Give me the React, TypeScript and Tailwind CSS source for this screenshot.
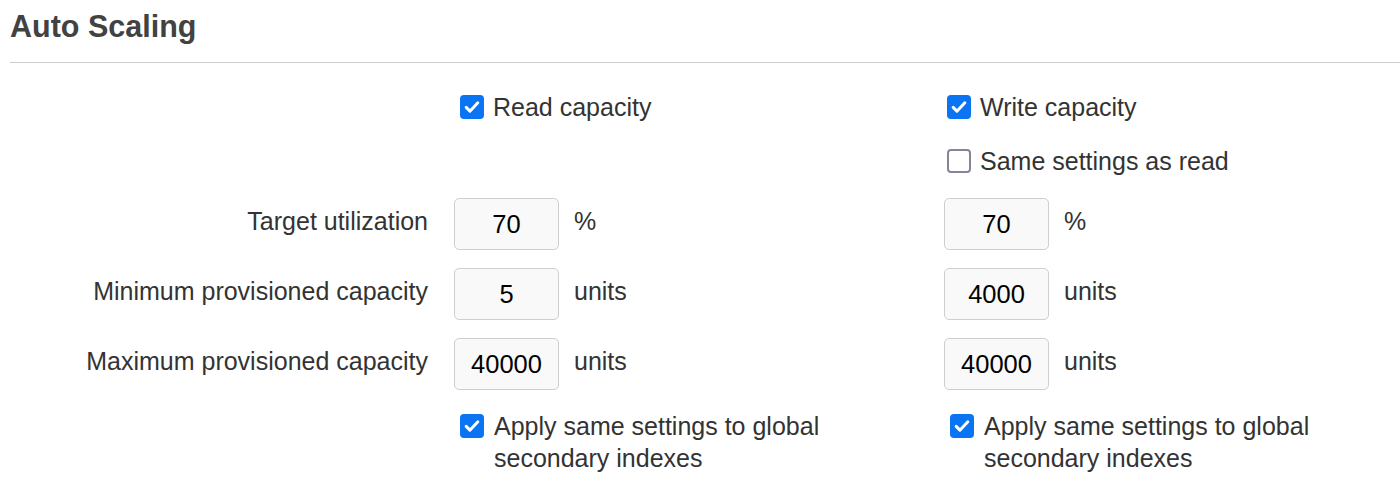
import React from "react";

function Check({ checked }: { checked: boolean }) {
  if (checked) {
    return (
      <span className="flex h-[24px] w-[24px] shrink-0 items-center justify-center rounded-[4px] bg-[#0a74f2]">
        <svg width="20" height="20" viewBox="0 0 24 24" fill="none">
          <path d="M5 12.5l4.5 4.5L19 7" stroke="#fff" strokeWidth="3.6" strokeLinecap="round" strokeLinejoin="round" />
        </svg>
      </span>
    );
  }
  return <span className="block h-[24px] w-[24px] shrink-0 rounded-[4px] border-[2.5px] border-[#85859a] bg-white" />;
}

function CheckRow({ checked, label, className = "" }: { checked: boolean; label: string; className?: string }) {
  return (
    <div className={`flex items-center gap-[9px] ${className}`}>
      <Check checked={checked} />
      <span className="leading-[24px]">{label}</span>
    </div>
  );
}

function Field({ value, unit }: { value: string; unit: string }) {
  return (
    <div className="flex items-start gap-[15px]">
      <div className="flex h-[52px] w-[105px] items-center justify-center rounded-[5px] border border-[#cfcfcf] bg-[#f9f9f9] text-[25.5px] text-black">
        {value}
      </div>
      <span className="pt-[11px] leading-[24px]">{unit}</span>
    </div>
  );
}

const rows = [
  { label: "Target utilization", read: "70", write: "70", unit: "%" },
  { label: "Minimum provisioned capacity", read: "5", write: "4000", unit: "units" },
  { label: "Maximum provisioned capacity", read: "40000", write: "40000", unit: "units" },
];

export default function App() {
  return (
    <div className="h-[485px] w-[1400px] overflow-hidden bg-white font-['Liberation_Sans',Arial,sans-serif] text-[25px] text-[#333]">
      <div className="pl-[10px] pt-[11px]">
        <h2 className="text-[30.5px] font-bold leading-[30px] text-[#424242]">Auto Scaling</h2>
      </div>
      <div className="ml-[10px] mt-[21px] h-px bg-[#cccccc]" />

      <div className="mt-[32px] grid grid-cols-[454px_490px_1fr]">
        <div />
        <CheckRow checked label="Read capacity" className="pl-[6px]" />
        <CheckRow checked label="Write capacity" className="pl-[3px]" />

        <div />
        <div />
        <CheckRow checked={false} label="Same settings as read" className="mt-[30px] pl-[3px]" />

        {rows.map((r, i) => (
          <React.Fragment key={r.label}>
            <div className={`pr-[26px] pt-[11px] text-right leading-[24px] ${i === 0 ? "mt-[25px]" : "mt-[18px]"}`}>
              {r.label}
            </div>
            <div className={i === 0 ? "mt-[25px]" : "mt-[18px]"}>
              <Field value={r.read} unit={r.unit} />
            </div>
            <div className={i === 0 ? "mt-[25px]" : "mt-[18px]"}>
              <Field value={r.write} unit={r.unit} />
            </div>
          </React.Fragment>
        ))}

        <div />
        <div className="mt-[20px] flex items-start gap-[10px] pl-[6px]">
          <span className="mt-[4px]">
            <Check checked />
          </span>
          <span className="max-w-[360px] leading-[32px]">Apply same settings to global secondary indexes</span>
        </div>
        <div className="mt-[20px] flex items-start gap-[10px] pl-[6px]">
          <span className="mt-[4px]">
            <Check checked />
          </span>
          <span className="max-w-[360px] leading-[32px]">Apply same settings to global secondary indexes</span>
        </div>
      </div>
    </div>
  );
}
